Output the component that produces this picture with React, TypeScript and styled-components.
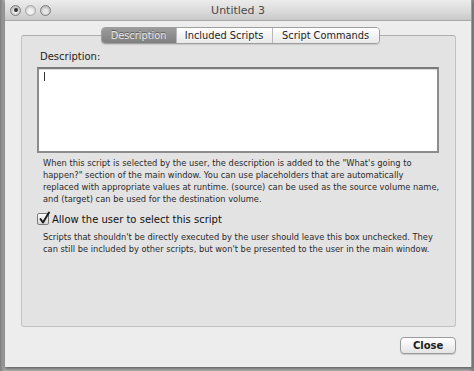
import React from "react";
import styled, { createGlobalStyle } from "styled-components";

const GlobalStyle = createGlobalStyle`
  html, body {
    margin: 0;
    padding: 0;
    background: #8f8f8f;
  }
  body {
    font-family: "DejaVu Sans", "Liberation Sans", sans-serif;
    color: #222;
  }
`;

const Page = styled.div`
  width: 474px;
  height: 371px;
  display: flex;
  background: linear-gradient(90deg, #7d7d7d 0, #b4b4b4 5px, #b4b4b4 469px, #7d7d7d 474px);
  padding: 0 3px 4px 5px;
  box-sizing: border-box;
`;

const Window = styled.div`
  flex: 1;
  display: flex;
  flex-direction: column;
  background: #ededed;
  border-right: 1px solid #9a9a9a;
  box-shadow: 0 2px 3px rgba(0, 0, 0, 0.45);
`;

const TitleBar = styled.div`
  height: 21px;
  flex: none;
  display: flex;
  align-items: center;
  position: relative;
  background: linear-gradient(#ececec, #d9d9d9 60%, #c8c8c8);
  border-bottom: 1px solid #a9a9a9;
  box-sizing: border-box;
`;

const Lights = styled.div`
  display: flex;
  gap: 4px;
  padding-left: 5px;
`;

const Light = styled.div<{ $dot?: boolean; $faint?: boolean }>`
  width: 11px;
  height: 11px;
  box-sizing: border-box;
  border-radius: 50%;
  background: ${(p) =>
    p.$faint
      ? "radial-gradient(circle at 50% 60%, #f2f2f2 30%, #cfcfcf 70%)"
      : "radial-gradient(circle at 50% 60%, #e6e6e6 30%, #bcbcbc 70%)"};
  border: 1px solid ${(p) => (p.$faint ? "#a8a8a8" : "#808080")};
  display: flex;
  align-items: center;
  justify-content: center;
  &::after {
    content: "";
    width: 4px;
    height: 4px;
    border-radius: 50%;
    background: ${(p) => (p.$dot ? "#333" : "transparent")};
  }
`;

const Title = styled.div`
  position: absolute;
  left: 0;
  right: 0;
  text-align: center;
  font-size: 11px;
  color: #4a4a4a;
  pointer-events: none;
`;

const Body = styled.div`
  flex: 1;
  display: flex;
  flex-direction: column;
  padding: 6px 15px 0 16px;
`;

const TabRow = styled.div`
  display: flex;
  justify-content: center;
  position: relative;
  z-index: 1;
  padding-left: 3px;
`;

const Segments = styled.div`
  display: flex;
  border: 1px solid #9e9e9e;
  border-radius: 4px;
  overflow: hidden;
  box-shadow: 0 1px 1px rgba(0, 0, 0, 0.12);
`;

const Tab = styled.div<{ $active?: boolean; $w: number }>`
  width: ${(p) => p.$w}px;
  height: 15px;
  display: flex;
  align-items: center;
  justify-content: center;
  font-size: 9.8px;
  color: ${(p) => (p.$active ? "#e9e9e9" : "#1c1c1c")};
  background: ${(p) =>
    p.$active
      ? "linear-gradient(#9c9c9c, #7f7f7f)"
      : "linear-gradient(#ffffff, #f3f3f3 50%, #e9e9e9)"};
  text-shadow: ${(p) => (p.$active ? "0 -1px 0 #5a5a5a" : "0 1px 0 #fff")};
  & + & {
    border-left: 1px solid #b8b8b8;
  }
`;

const Box = styled.div`
  margin-top: -9px;
  height: 292px;
  box-sizing: border-box;
  background: #e3e3e3;
  border: 1px solid #c2c2c2;
  border-top-color: #aeaeae;
  border-radius: 3px;
  padding: 15px 16px 0 15px;
  display: flex;
  flex-direction: column;
`;

const FieldLabel = styled.div`
  font-size: 10px;
  color: #1e1e1e;
  padding-left: 3px;
  margin-bottom: 5px;
`;

const TextArea = styled.div`
  height: 76px;
  background: #fff;
  border: 2px solid #8c8c8c;
  border-top-color: #7a7a7a;
  box-shadow: inset 0 1px 1px rgba(0, 0, 0, 0.15);
  padding: 3px 5px;
`;

const Caret = styled.div`
  width: 1px;
  height: 9px;
  background: #333;
`;

const Help = styled.div<{ $top: number }>`
  margin-top: ${(p) => p.$top}px;
  padding-left: 6px;
  font-size: 8.3px;
  line-height: 12px;
  color: #2a2a2a;
  white-space: nowrap;
`;

const HelpLine = styled.div``;

const CheckRow = styled.label`
  display: flex;
  align-items: center;
  gap: 3px;
  margin-top: 7px;
  font-size: 10px;
  color: #111;
  height: 14px;
`;

const CheckBox = styled.div`
  width: 12px;
  height: 12px;
  position: relative;
  border: 1px solid #7b7b7b;
  border-radius: 2px;
  box-sizing: border-box;
  background: linear-gradient(#fdfdfd, #d6d6d6);
  flex: none;
`;

const Tick = styled.svg`
  position: absolute;
  left: 0px;
  top: -3px;
`;

const Footer = styled.div`
  display: flex;
  justify-content: flex-end;
  padding-top: 10px;
`;

const Button = styled.button`
  width: 56px;
  height: 17px;
  padding: 0;
  font-family: inherit;
  font-size: 10px;
  font-weight: bold;
  color: #1c1c1c;
  background: linear-gradient(#ffffff, #f1f1f1 50%, #e4e4e4);
  border: 1px solid #9b9b9b;
  border-radius: 4px;
  box-shadow: 0 1px 1px rgba(0, 0, 0, 0.15);
`;

const descriptionHelp = [
  'When this script is selected by the user, the description is added to the "What\'s going to',
  'happen?" section of the main window. You can use placeholders that are automatically',
  "replaced with appropriate values at runtime. (source) can be used as the source volume name,",
  "and (target) can be used for the destination volume.",
];

const allowHelp = [
  "Scripts that shouldn't be directly executed by the user should leave this box unchecked. They",
  "can still be included by other scripts, but won't be presented to the user in the main window.",
];

export default function App() {
  return (
    <Page>
      <GlobalStyle />
      <Window>
        <TitleBar>
          <Lights>
            <Light $dot />
            <Light $faint />
            <Light />
          </Lights>
          <Title>Untitled 3</Title>
        </TitleBar>
        <Body>
          <TabRow>
            <Segments>
              <Tab $active $w={74}>Description</Tab>
              <Tab $w={95}>Included Scripts</Tab>
              <Tab $w={106}>Script Commands</Tab>
            </Segments>
          </TabRow>
          <Box>
            <FieldLabel>Description:</FieldLabel>
            <TextArea>
              <Caret />
            </TextArea>
            <Help $top={4}>
              {descriptionHelp.map((line) => (
                <HelpLine key={line}>{line}</HelpLine>
              ))}
            </Help>
            <CheckRow>
              <CheckBox>
                <Tick width="13" height="14" viewBox="0 0 13 14">
                  <path d="M2.5 8 L5 11.5 L11 1.5" fill="none" stroke="#1e1e1e" strokeWidth="2" strokeLinecap="round" strokeLinejoin="round" />
                </Tick>
              </CheckBox>
              Allow the user to select this script
            </CheckRow>
            <Help $top={5}>
              {allowHelp.map((line) => (
                <HelpLine key={line}>{line}</HelpLine>
              ))}
            </Help>
          </Box>
          <Footer>
            <Button>Close</Button>
          </Footer>
        </Body>
      </Window>
    </Page>
  );
}
